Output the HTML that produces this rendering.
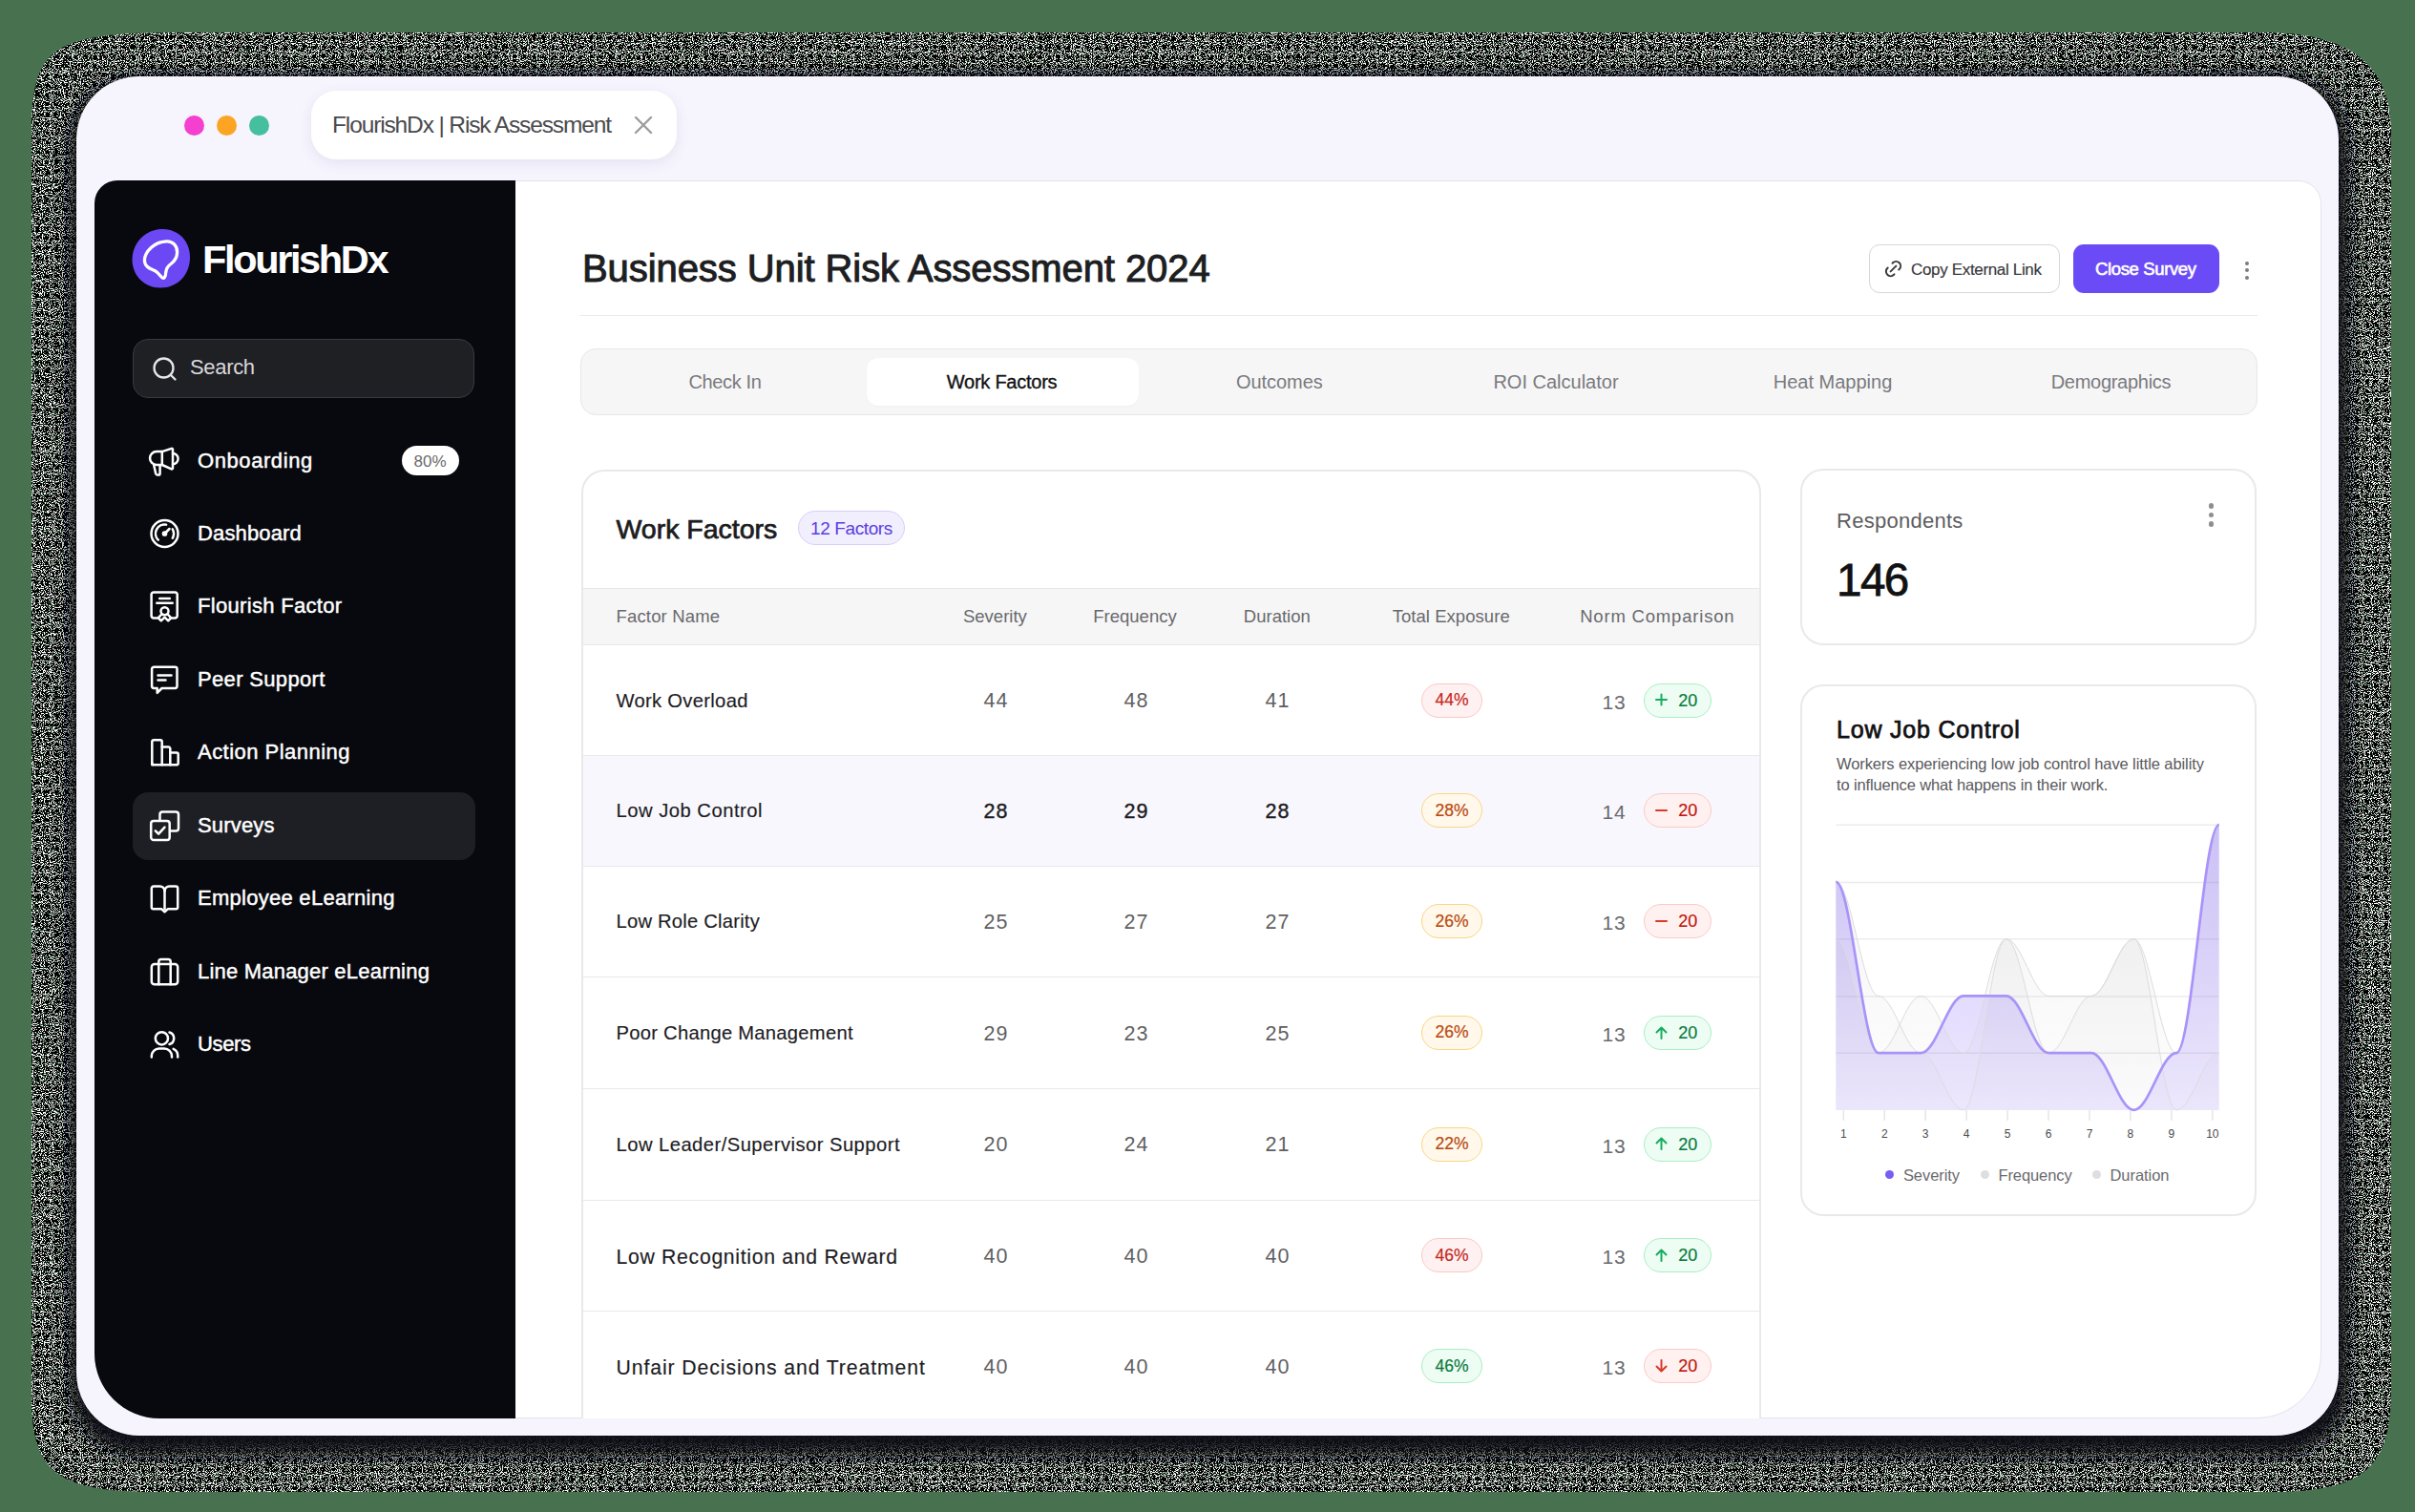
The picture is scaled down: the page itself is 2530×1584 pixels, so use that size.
<!DOCTYPE html>
<html><head><meta charset="utf-8"><title>FlourishDx | Risk Assessment</title>
<style>
html,body{margin:0;padding:0;width:2530px;height:1584px;overflow:hidden;background:#48714f;}
body{position:relative;font-family:"Liberation Sans", sans-serif;}
.b{position:absolute;}
.t{position:absolute;white-space:nowrap;}
</style></head><body>
<svg class="b" style="left:0;top:0" width="2530" height="1584" viewBox="0 0 2530 1584">
<defs>
<filter id="nz" x="0" y="0" width="100%" height="100%" color-interpolation-filters="sRGB">
<feTurbulence type="fractalNoise" baseFrequency="0.9" numOctaves="1" seed="11" result="n"/>
<feColorMatrix in="n" type="matrix" values="0 0 0 0 0  0 0 0 0 0  0 0 0 0 0  0 60 0 0 -24.000" result="ba"/>
<feFlood flood-color="#000000" result="bf"/>
<feComposite in="bf" in2="ba" operator="in" result="black"/>
<feColorMatrix in="n" type="matrix" values="0 0 0 0 0  0 0 0 0 0  0 0 0 0 0  60 0 0 0 -33.000" result="wa"/>
<feFlood flood-color="#ffffff" result="wf"/>
<feComposite in="wf" in2="wa" operator="in" result="white"/>
<feMerge><feMergeNode in="black"/><feMergeNode in="white"/></feMerge>
</filter>
<clipPath id="band"><path d="M188,34 L2371,34 C2462.12,34 2505,67.92 2505,140 L2505,1454 C2505,1539.02 2476.84,1563 2377,1563 L165,1563 C59.400000000000006,1563 33,1543.0 33,1463 L33,136 C33,49.3 56.25,34 188,34 Z"/></clipPath>
<filter id="blur1" x="-5%" y="-5%" width="110%" height="110%"><feGaussianBlur stdDeviation="9"/></filter>
</defs>
<rect x="0" y="0" width="2530" height="1584" fill="#48714f"/>
<g clip-path="url(#band)">
<rect x="0" y="0" width="2530" height="1584" filter="url(#nz)"/>
<rect x="73" y="79" width="2388" height="1446" rx="72" fill="#0a0a18" filter="url(#blur1)" opacity="0.95"/>
</g>
</svg>
<div class="b" style="left:80.00px;top:80.00px;width:2370.00px;height:1424.00px;background:#f6f4fd;border-radius:66px;"></div>
<div class="b" style="left:192.50px;top:121.10px;width:21.00px;height:21.00px;background:#f43fcf;border-radius:50%;"></div>
<div class="b" style="left:226.50px;top:121.10px;width:21.00px;height:21.00px;background:#fca523;border-radius:50%;"></div>
<div class="b" style="left:261.10px;top:121.10px;width:21.00px;height:21.00px;background:#46bea0;border-radius:50%;"></div>
<div class="b" style="left:326.00px;top:95.00px;width:383.00px;height:72.00px;background:#fff;border-radius:26px;box-shadow:0 4px 14px rgba(90,80,140,0.10);"></div>
<div class="t" style="top:119.26px;font-size:24.5px;line-height:24.5px;color:#4a4a4d;font-weight:400;letter-spacing:-1.133px;left:348.00px;"><span id="tabtitle">FlourishDx | Risk Assessment</span></div>
<svg class="b" style="left:662px;top:119px" width="24" height="24" viewBox="0 0 24 24"><path d="M4 4L20 20M20 4L4 20" stroke="#9c9c9f" stroke-width="2.4" stroke-linecap="round"/></svg>
<div class="b" style="left:99.00px;top:188.50px;width:2333.00px;height:1297.50px;background:#fff;border:1.5px solid #e4e3ea;box-sizing:border-box;border-radius:24px 24px 68px 68px;"></div>
<div class="b" style="left:99.00px;top:188.50px;width:440.50px;height:1297.50px;background:#08090e;border-radius:24px 0 0 68px;"></div>
<svg class="b" style="left:136px;top:238px" width="66" height="66" viewBox="0 0 66 66">
<path d="M34 2C50.5 2 63 14 63 31.5C63 50 50 63.5 32 63.5C15 63.5 2.5 50.5 2.5 34C2.5 16.5 16.5 2 34 2Z" fill="#6c48f4"/>
<path d="M38.6 14.8C45 14.5 49.8 19.5 49.6 26.6C49.4 32 47 35.5 43 38.5C39.5 41 38.2 43.5 37.8 47C37.5 50.5 36.8 53.5 34.8 53.4C33 53.3 31.2 48.5 26.5 45.8C22 43.5 16.5 42.5 15.6 36.5C14.8 31 18 25.5 22.2 21.5C27 17 33 15 38.6 14.8Z" fill="none" stroke="#fff" stroke-width="3.3" stroke-linejoin="round"/>
</svg>
<div class="t" style="top:250.87px;font-size:41.5px;line-height:41.5px;color:#ffffff;font-weight:700;letter-spacing:-2.361px;left:212.00px;"><span id="logotxt">FlourishDx</span></div>
<div class="b" style="left:139.00px;top:355.00px;width:358.00px;height:61.50px;background:#1f2024;border:1.5px solid #393a3f;box-sizing:border-box;border-radius:16px;"></div>
<svg class="b" style="left:159px;top:372.5px" width="28" height="28" viewBox="0 0 28 28"><circle cx="12.5" cy="12.5" r="10" fill="none" stroke="#e6e6e6" stroke-width="2.3"/><path d="M20 20L24.5 24.5" stroke="#e6e6e6" stroke-width="2.3" stroke-linecap="round"/></svg>
<div class="t" style="top:374.38px;font-size:22px;line-height:22px;color:#d9d9db;font-weight:400;letter-spacing:-0.323px;left:199.00px;"><span id="searchtxt">Search</span></div>
<div class="b" style="left:139.00px;top:830.00px;width:359.00px;height:70.50px;background:#1e1f24;border-radius:16px;"></div>
<svg class="b" style="left:157px;top:466.5px;overflow:visible" width="31" height="31" viewBox="0 0 31 31" fill="none" stroke="#fff" stroke-width="2.5" stroke-linecap="round" stroke-linejoin="round"><path d="M12.8 6.1H7A6.95 6.95 0 0 0 7 20h5.8l9.8 4.3a1 1 0 0 0 1.4-.9V3.8a1 1 0 0 0-1.4-.9L12.8 6.1z"/><path d="M12.8 6.1V20"/><path d="M24 8a5.6 5.6 0 0 1 0 11.2"/><path d="M4.2 20.2l2 9.1a1.6 1.6 0 0 0 1.6 1.2h1.2a1.6 1.6 0 0 0 1.6-1.6V20.2"/></svg>
<div class="t" style="top:471.58px;font-size:22px;line-height:22px;color:#ffffff;font-weight:400;letter-spacing:0.580px;-webkit-text-stroke:0.45px #fff;left:207.00px;"><span id="nav0">Onboarding</span></div>
<svg class="b" style="left:157px;top:542.9px;overflow:visible" width="31" height="31" viewBox="0 0 31 31" fill="none" stroke="#fff" stroke-width="2.5" stroke-linecap="round" stroke-linejoin="round"><circle cx="15.5" cy="16" r="14"/><path d="M8.78 22.72A9.5 9.5 0 0 1 17.15 6.64"/><path d="M23.73 11.25A9.5 9.5 0 0 1 23.73 20.75"/><path d="M15.5 16l5-5"/><circle cx="15.5" cy="16" r="1.6" fill="#fff"/></svg>
<div class="t" style="top:547.98px;font-size:22px;line-height:22px;color:#ffffff;font-weight:400;letter-spacing:0.145px;-webkit-text-stroke:0.45px #fff;left:207.00px;"><span id="nav1">Dashboard</span></div>
<svg class="b" style="left:157px;top:619.3px;overflow:visible" width="31" height="31" viewBox="0 0 31 31" fill="none" stroke="#fff" stroke-width="2.5" stroke-linecap="round" stroke-linejoin="round"><path d="M9 28.5H4a2.4 2.4 0 0 1-2.4-2.4V3.8A2.4 2.4 0 0 1 4 1.4h22.3a2.4 2.4 0 0 1 2.4 2.4v22.3a2.4 2.4 0 0 1-2.4 2.4H22"/><path d="M10.2 8h10.6M7.3 12.7h16.4"/><circle cx="15.5" cy="21.3" r="4"/><path d="M12.3 24.5L8.8 28.3l3 3 3.7-3.6 3.7 3.6 3-3-3.5-3.8"/></svg>
<div class="t" style="top:624.38px;font-size:22px;line-height:22px;color:#ffffff;font-weight:400;letter-spacing:0.320px;-webkit-text-stroke:0.45px #fff;left:207.00px;"><span id="nav2">Flourish Factor</span></div>
<svg class="b" style="left:157px;top:695.8px;overflow:visible" width="31" height="31" viewBox="0 0 31 31" fill="none" stroke="#fff" stroke-width="2.5" stroke-linecap="round" stroke-linejoin="round"><path d="M4.3 2.8h22a2.2 2.2 0 0 1 2.2 2.2V22.8a2.2 2.2 0 0 1-2.2 2.2H12.5l-4.8 4.8V25H4.3a2.2 2.2 0 0 1-2.2-2.2V5a2.2 2.2 0 0 1 2.2-2.2z"/><path d="M8.5 11.5h14M8.5 16.5h8"/></svg>
<div class="t" style="top:700.88px;font-size:22px;line-height:22px;color:#ffffff;font-weight:400;letter-spacing:0.333px;-webkit-text-stroke:0.45px #fff;left:207.00px;"><span id="nav3">Peer Support</span></div>
<svg class="b" style="left:157px;top:772.3px;overflow:visible" width="31" height="31" viewBox="0 0 31 31" fill="none" stroke="#fff" stroke-width="2.5" stroke-linecap="round" stroke-linejoin="round"><path d="M2.3 29.3V5a1.8 1.8 0 0 1 1.8-1.8h6.8A1.8 1.8 0 0 1 12.7 5v24.3"/><path d="M12.7 10.5h6.8a1.8 1.8 0 0 1 1.8 1.8v17"/><path d="M21.3 16.5h6.6a1.8 1.8 0 0 1 1.8 1.8v9.2a1.8 1.8 0 0 1-1.8 1.8H4.1a1.8 1.8 0 0 1-1.8-1.8"/></svg>
<div class="t" style="top:777.38px;font-size:22px;line-height:22px;color:#ffffff;font-weight:400;letter-spacing:0.472px;-webkit-text-stroke:0.45px #fff;left:207.00px;"><span id="nav4">Action Planning</span></div>
<svg class="b" style="left:157px;top:848.8px;overflow:visible" width="31" height="31" viewBox="0 0 31 31" fill="none" stroke="#fff" stroke-width="2.5" stroke-linecap="round" stroke-linejoin="round"><path d="M10.5 10V4.3a2.8 2.8 0 0 1 2.8-2.8h13.9a2.8 2.8 0 0 1 2.8 2.8v14.4a2.8 2.8 0 0 1-2.8 2.8h-5.5"/><rect x="1.2" y="11" width="19.5" height="20" rx="2.8"/><path d="M5.8 21.3l3.3 3.4 6.4-7"/></svg>
<div class="t" style="top:853.88px;font-size:22px;line-height:22px;color:#ffffff;font-weight:400;letter-spacing:0.171px;-webkit-text-stroke:0.45px #fff;left:207.00px;"><span id="nav5">Surveys</span></div>
<svg class="b" style="left:157px;top:925.2px;overflow:visible" width="31" height="31" viewBox="0 0 31 31" fill="none" stroke="#fff" stroke-width="2.5" stroke-linecap="round" stroke-linejoin="round"><path d="M15.5 8.5a5 5 0 0 0-5-5H4a2.2 2.2 0 0 0-2.2 2.2v19.8A1.8 1.8 0 0 0 3.6 27.3h8.7l3.2 3 3.2-3h8.7a1.8 1.8 0 0 0 1.8-1.8V5.7A2.2 2.2 0 0 0 27 3.5h-6.5a5 5 0 0 0-5 5z"/><path d="M15.5 8.5v18.8"/></svg>
<div class="t" style="top:930.28px;font-size:22px;line-height:22px;color:#ffffff;font-weight:400;letter-spacing:0.270px;-webkit-text-stroke:0.45px #fff;left:207.00px;"><span id="nav6">Employee eLearning</span></div>
<svg class="b" style="left:157px;top:1001.5px;overflow:visible" width="31" height="31" viewBox="0 0 31 31" fill="none" stroke="#fff" stroke-width="2.5" stroke-linecap="round" stroke-linejoin="round"><rect x="1.8" y="8" width="27.4" height="21.2" rx="3"/><path d="M9.3 8V5.5a2.5 2.5 0 0 1 2.5-2.5h7.4a2.5 2.5 0 0 1 2.5 2.5V8"/><path d="M9.3 8v21.2M21.7 8v21.2"/></svg>
<div class="t" style="top:1006.58px;font-size:22px;line-height:22px;color:#ffffff;font-weight:400;letter-spacing:0.209px;-webkit-text-stroke:0.45px #fff;left:207.00px;"><span id="nav7">Line Manager eLearning</span></div>
<svg class="b" style="left:157px;top:1078.2px;overflow:visible" width="31" height="31" viewBox="0 0 31 31" fill="none" stroke="#fff" stroke-width="2.5" stroke-linecap="round" stroke-linejoin="round"><circle cx="12.4" cy="9.8" r="6.6"/><path d="M1.8 29.5v-1.2a7.8 7.8 0 0 1 7.8-7.8h5.6a7.8 7.8 0 0 1 7.8 7.8v1.2"/><path d="M20.5 3.5a6.5 6.5 0 0 1 0 12.5"/><path d="M24.7 20.8a7.6 7.6 0 0 1 4.5 7v1.7"/></svg>
<div class="t" style="top:1083.28px;font-size:22px;line-height:22px;color:#ffffff;font-weight:400;letter-spacing:-0.365px;-webkit-text-stroke:0.45px #fff;left:207.00px;"><span id="nav8">Users</span></div>
<div class="b" style="left:420.50px;top:467.40px;width:60.20px;height:30.90px;background:#fff;border-radius:16px;"></div>
<div class="t" style="top:474.61px;font-size:17px;line-height:17px;color:#6b6b6b;font-weight:400;letter-spacing:0.000px;left:-149.40px;width:1200px;text-align:center;"><span id="pct80" style="margin-right:-0.000px">80%</span></div>
<div class="t" style="top:261.14px;font-size:40px;line-height:40px;color:#1d1e22;font-weight:400;letter-spacing:-0.079px;-webkit-text-stroke:1.0px #1d1e22;left:610.00px;"><span id="title">Business Unit Risk Assessment 2024</span></div>
<div class="b" style="left:1957.50px;top:255.70px;width:200.50px;height:51.30px;background:#fff;border:1.5px solid #d7d7da;box-sizing:border-box;border-radius:11px;"></div>
<svg class="b" style="left:1972px;top:270px" width="23" height="23" viewBox="0 0 24 24" fill="none" stroke="#3a3a3a" stroke-width="2.1" stroke-linecap="round" stroke-linejoin="round"><path d="M9 15l6-6"/><path d="M11 6l.46-.54a5 5 0 0 1 7.07 7.07l-.53.47"/><path d="M13 18l-.4.53a5.07 5.07 0 0 1-7.13 0 4.97 4.97 0 0 1 0-7.07l.53-.46"/></svg>
<div class="t" style="top:273.61px;font-size:17px;line-height:17px;color:#38383b;font-weight:400;letter-spacing:-0.335px;-webkit-text-stroke:0.15px #38383b;left:2002.00px;"><span id="copytxt">Copy External Link</span></div>
<div class="b" style="left:2172.00px;top:255.50px;width:153.00px;height:51.50px;background:#6b4bf5;border-radius:11px;"></div>
<div class="t" style="top:272.84px;font-size:18.5px;line-height:18.5px;color:#ffffff;font-weight:400;letter-spacing:-0.365px;-webkit-text-stroke:0.6px #fff;left:2195.00px;"><span id="closetxt">Close Survey</span></div>
<div class="b" style="left:2352.20px;top:273.80px;width:4.20px;height:4.20px;background:#7d7d80;border-radius:50%;"></div>
<div class="b" style="left:2352.20px;top:281.30px;width:4.20px;height:4.20px;background:#7d7d80;border-radius:50%;"></div>
<div class="b" style="left:2352.20px;top:288.80px;width:4.20px;height:4.20px;background:#7d7d80;border-radius:50%;"></div>
<div class="b" style="left:608.00px;top:329.50px;width:1757.00px;height:1.50px;background:#e9e9ec;"></div>
<div class="b" style="left:608.00px;top:365.00px;width:1757.00px;height:70.00px;background:#f6f6f7;border:1.5px solid #e7e7ea;box-sizing:border-box;border-radius:16px;"></div>
<div class="b" style="left:908.00px;top:375.00px;width:285.00px;height:50.00px;background:#fff;border-radius:12px;box-shadow:0 1px 2px rgba(0,0,0,0.03);"></div>
<div class="t" style="top:390.07px;font-size:20px;line-height:20px;color:#7a7a7d;font-weight:400;letter-spacing:-0.350px;left:159.70px;width:1200px;text-align:center;"><span id="tab0" style="margin-right:0.350px">Check In</span></div>
<div class="t" style="top:390.07px;font-size:20px;line-height:20px;color:#111114;font-weight:400;letter-spacing:-0.256px;-webkit-text-stroke:0.35px #111;left:449.70px;width:1200px;text-align:center;"><span id="tab1" style="margin-right:0.256px">Work Factors</span></div>
<div class="t" style="top:390.07px;font-size:20px;line-height:20px;color:#7a7a7d;font-weight:400;letter-spacing:-0.083px;left:740.40px;width:1200px;text-align:center;"><span id="tab2" style="margin-right:0.083px">Outcomes</span></div>
<div class="t" style="top:390.07px;font-size:20px;line-height:20px;color:#7a7a7d;font-weight:400;letter-spacing:0.000px;left:1030.00px;width:1200px;text-align:center;"><span id="tab3" style="margin-right:-0.000px">ROI Calculator</span></div>
<div class="t" style="top:390.07px;font-size:20px;line-height:20px;color:#7a7a7d;font-weight:400;letter-spacing:0.000px;left:1320.00px;width:1200px;text-align:center;"><span id="tab4" style="margin-right:-0.000px">Heat Mapping</span></div>
<div class="t" style="top:390.07px;font-size:20px;line-height:20px;color:#7a7a7d;font-weight:400;letter-spacing:-0.277px;left:1611.60px;width:1200px;text-align:center;"><span id="tab5" style="margin-right:0.277px">Demographics</span></div>
<div class="b" style="left:608.50px;top:491.70px;width:1236.00px;height:994.30px;background:#fff;border:2px solid #e9e9ec;border-bottom:none;box-sizing:border-box;border-radius:24px 24px 0 0;"></div>
<div class="t" style="top:539.87px;font-size:28.5px;line-height:28.5px;color:#1c1c1f;font-weight:400;letter-spacing:-0.021px;-webkit-text-stroke:0.75px #1c1c1f;left:645.50px;"><span id="wftitle">Work Factors</span></div>
<div class="b" style="left:836.00px;top:535.40px;width:112.30px;height:35.80px;background:#f1eefe;border:1.5px solid #d8cffb;box-sizing:border-box;border-radius:18px;"></div>
<div class="t" style="top:543.92px;font-size:19px;line-height:19px;color:#5b3de2;font-weight:400;letter-spacing:-0.395px;left:292.20px;width:1200px;text-align:center;"><span id="badge12" style="margin-right:0.395px">12 Factors</span></div>
<div class="b" style="left:610.50px;top:616.00px;width:1232.00px;height:60.00px;background:#f6f6f7;border-top:1.5px solid #e7e7ea;border-bottom:1.5px solid #e7e7ea;box-sizing:border-box;"></div>
<div class="t" style="top:636.84px;font-size:18.5px;line-height:18.5px;color:#69696c;font-weight:400;letter-spacing:0.165px;left:645.50px;"><span id="hname">Factor Name</span></div>
<div class="t" style="top:636.84px;font-size:18.5px;line-height:18.5px;color:#69696c;font-weight:400;letter-spacing:0.000px;left:442.40px;width:1200px;text-align:center;"><span id="h0" style="margin-right:-0.000px">Severity</span></div>
<div class="t" style="top:636.84px;font-size:18.5px;line-height:18.5px;color:#69696c;font-weight:400;letter-spacing:0.000px;left:589.00px;width:1200px;text-align:center;"><span id="h1" style="margin-right:-0.000px">Frequency</span></div>
<div class="t" style="top:636.84px;font-size:18.5px;line-height:18.5px;color:#69696c;font-weight:400;letter-spacing:0.000px;left:737.80px;width:1200px;text-align:center;"><span id="h2" style="margin-right:-0.000px">Duration</span></div>
<div class="t" style="top:636.84px;font-size:18.5px;line-height:18.5px;color:#69696c;font-weight:400;letter-spacing:0.049px;left:920.20px;width:1200px;text-align:center;"><span id="h3" style="margin-right:-0.049px">Total Exposure</span></div>
<div class="t" style="top:636.84px;font-size:18.5px;line-height:18.5px;color:#69696c;font-weight:400;letter-spacing:0.806px;left:1135.90px;width:1200px;text-align:center;"><span id="h4" style="margin-right:-0.806px">Norm Comparison</span></div>
<div class="t" style="top:723.60px;font-size:20.2px;line-height:20.2px;color:#1c1c1f;font-weight:400;letter-spacing:0.303px;-webkit-text-stroke:0.15px #1c1c1f;left:645.50px;"><span id="rn0">Work Overload</span></div>
<div class="t" style="top:724.20px;font-size:21.5px;line-height:21.5px;color:#5f5f62;font-weight:400;letter-spacing:1.200px;left:443.00px;width:1200px;text-align:center;"><span id="t32" style="margin-right:-1.200px">44</span></div>
<div class="t" style="top:724.20px;font-size:21.5px;line-height:21.5px;color:#5f5f62;font-weight:400;letter-spacing:1.200px;left:590.00px;width:1200px;text-align:center;"><span id="t33" style="margin-right:-1.200px">48</span></div>
<div class="t" style="top:724.20px;font-size:21.5px;line-height:21.5px;color:#5f5f62;font-weight:400;letter-spacing:1.200px;left:738.00px;width:1200px;text-align:center;"><span id="t34" style="margin-right:-1.200px">41</span></div>
<div class="b" style="left:1489.00px;top:715.60px;width:64.00px;height:36.00px;background:#fff1f1;border:1.5px solid #f9c8c6;box-sizing:border-box;border-radius:18px;"></div>
<div class="t" style="top:725.09px;font-size:17.5px;line-height:17.5px;color:#c5281d;font-weight:400;letter-spacing:0.000px;-webkit-text-stroke:0.2px #c5281d;left:921.00px;width:1200px;text-align:center;"><span id="t35" style="margin-right:-0.000px">44%</span></div>
<div class="t" style="top:724.72px;font-size:21px;line-height:21px;color:#6a6a6d;font-weight:400;letter-spacing:0.800px;left:1090.70px;width:1200px;text-align:center;"><span id="t36" style="margin-right:-0.800px">13</span></div>
<div class="b" style="left:1722.00px;top:715.60px;width:70.80px;height:36.00px;background:#edfdf4;border:1.5px solid #a9eec5;box-sizing:border-box;border-radius:18px;"></div>
<svg class="b" style="left:1734px;top:726.1px" width="13" height="14" viewBox="0 0 12 14" fill="none" stroke="#17ad5d" stroke-width="2" stroke-linecap="round" stroke-linejoin="round"><path d="M6 1.5v11M0.5 7h11"/></svg>
<div class="t" style="top:724.66px;font-size:18px;line-height:18px;color:#0c7a3f;font-weight:400;letter-spacing:0.000px;-webkit-text-stroke:0.2px #0c7a3f;left:1168.20px;width:1200px;text-align:center;"><span id="t37" style="margin-right:-0.000px">20</span></div>
<div class="b" style="left:610.50px;top:791.20px;width:1232.00px;height:116.10px;background:#f8f7fd;"></div>
<div class="b" style="left:610.50px;top:790.50px;width:1232.00px;height:1.25px;background:#e9e9ec;"></div>
<div class="t" style="top:839.25px;font-size:20.2px;line-height:20.2px;color:#1c1c1f;font-weight:400;letter-spacing:0.509px;-webkit-text-stroke:0.15px #1c1c1f;left:645.50px;"><span id="rn1">Low Job Control</span></div>
<div class="t" style="top:839.85px;font-size:21.5px;line-height:21.5px;color:#1c1c1f;font-weight:400;letter-spacing:1.200px;-webkit-text-stroke:0.4px #1c1c1f;left:443.00px;width:1200px;text-align:center;"><span id="t39" style="margin-right:-1.200px">28</span></div>
<div class="t" style="top:839.85px;font-size:21.5px;line-height:21.5px;color:#1c1c1f;font-weight:400;letter-spacing:1.200px;-webkit-text-stroke:0.4px #1c1c1f;left:590.00px;width:1200px;text-align:center;"><span id="t40" style="margin-right:-1.200px">29</span></div>
<div class="t" style="top:839.85px;font-size:21.5px;line-height:21.5px;color:#1c1c1f;font-weight:400;letter-spacing:1.200px;-webkit-text-stroke:0.4px #1c1c1f;left:738.00px;width:1200px;text-align:center;"><span id="t41" style="margin-right:-1.200px">28</span></div>
<div class="b" style="left:1489.00px;top:831.25px;width:64.00px;height:36.00px;background:#fff8eb;border:1.5px solid #f9d680;box-sizing:border-box;border-radius:18px;"></div>
<div class="t" style="top:840.74px;font-size:17.5px;line-height:17.5px;color:#b84a0e;font-weight:400;letter-spacing:0.000px;-webkit-text-stroke:0.2px #b84a0e;left:921.00px;width:1200px;text-align:center;"><span id="t42" style="margin-right:-0.000px">28%</span></div>
<div class="t" style="top:840.37px;font-size:21px;line-height:21px;color:#6a6a6d;font-weight:400;letter-spacing:0.800px;left:1090.70px;width:1200px;text-align:center;"><span id="t43" style="margin-right:-0.800px">14</span></div>
<div class="b" style="left:1722.00px;top:831.25px;width:70.80px;height:36.00px;background:#fef1f0;border:1.5px solid #fbcac7;box-sizing:border-box;border-radius:18px;"></div>
<svg class="b" style="left:1734px;top:841.8px" width="13" height="14" viewBox="0 0 12 14" fill="none" stroke="#d83a2c" stroke-width="2" stroke-linecap="round" stroke-linejoin="round"><path d="M0.5 7h11"/></svg>
<div class="t" style="top:840.31px;font-size:18px;line-height:18px;color:#c0170f;font-weight:400;letter-spacing:0.000px;-webkit-text-stroke:0.2px #c0170f;left:1168.20px;width:1200px;text-align:center;"><span id="t44" style="margin-right:-0.000px">20</span></div>
<div class="b" style="left:610.50px;top:906.50px;width:1232.00px;height:1.25px;background:#e9e9ec;"></div>
<div class="t" style="top:955.35px;font-size:20.2px;line-height:20.2px;color:#1c1c1f;font-weight:400;letter-spacing:0.221px;-webkit-text-stroke:0.15px #1c1c1f;left:645.50px;"><span id="rn2">Low Role Clarity</span></div>
<div class="t" style="top:955.95px;font-size:21.5px;line-height:21.5px;color:#5f5f62;font-weight:400;letter-spacing:1.200px;left:443.00px;width:1200px;text-align:center;"><span id="t46" style="margin-right:-1.200px">25</span></div>
<div class="t" style="top:955.95px;font-size:21.5px;line-height:21.5px;color:#5f5f62;font-weight:400;letter-spacing:1.200px;left:590.00px;width:1200px;text-align:center;"><span id="t47" style="margin-right:-1.200px">27</span></div>
<div class="t" style="top:955.95px;font-size:21.5px;line-height:21.5px;color:#5f5f62;font-weight:400;letter-spacing:1.200px;left:738.00px;width:1200px;text-align:center;"><span id="t48" style="margin-right:-1.200px">27</span></div>
<div class="b" style="left:1489.00px;top:947.35px;width:64.00px;height:36.00px;background:#fff8eb;border:1.5px solid #f9d680;box-sizing:border-box;border-radius:18px;"></div>
<div class="t" style="top:956.84px;font-size:17.5px;line-height:17.5px;color:#b84a0e;font-weight:400;letter-spacing:0.000px;-webkit-text-stroke:0.2px #b84a0e;left:921.00px;width:1200px;text-align:center;"><span id="t49" style="margin-right:-0.000px">26%</span></div>
<div class="t" style="top:956.47px;font-size:21px;line-height:21px;color:#6a6a6d;font-weight:400;letter-spacing:0.800px;left:1090.70px;width:1200px;text-align:center;"><span id="t50" style="margin-right:-0.800px">13</span></div>
<div class="b" style="left:1722.00px;top:947.35px;width:70.80px;height:36.00px;background:#fef1f0;border:1.5px solid #fbcac7;box-sizing:border-box;border-radius:18px;"></div>
<svg class="b" style="left:1734px;top:957.8px" width="13" height="14" viewBox="0 0 12 14" fill="none" stroke="#d83a2c" stroke-width="2" stroke-linecap="round" stroke-linejoin="round"><path d="M0.5 7h11"/></svg>
<div class="t" style="top:956.41px;font-size:18px;line-height:18px;color:#c0170f;font-weight:400;letter-spacing:0.000px;-webkit-text-stroke:0.2px #c0170f;left:1168.20px;width:1200px;text-align:center;"><span id="t51" style="margin-right:-0.000px">20</span></div>
<div class="b" style="left:610.50px;top:1022.50px;width:1232.00px;height:1.25px;background:#e9e9ec;"></div>
<div class="t" style="top:1071.95px;font-size:20.2px;line-height:20.2px;color:#1c1c1f;font-weight:400;letter-spacing:0.266px;-webkit-text-stroke:0.15px #1c1c1f;left:645.50px;"><span id="rn3">Poor Change Management</span></div>
<div class="t" style="top:1072.55px;font-size:21.5px;line-height:21.5px;color:#5f5f62;font-weight:400;letter-spacing:1.200px;left:443.00px;width:1200px;text-align:center;"><span id="t53" style="margin-right:-1.200px">29</span></div>
<div class="t" style="top:1072.55px;font-size:21.5px;line-height:21.5px;color:#5f5f62;font-weight:400;letter-spacing:1.200px;left:590.00px;width:1200px;text-align:center;"><span id="t54" style="margin-right:-1.200px">23</span></div>
<div class="t" style="top:1072.55px;font-size:21.5px;line-height:21.5px;color:#5f5f62;font-weight:400;letter-spacing:1.200px;left:738.00px;width:1200px;text-align:center;"><span id="t55" style="margin-right:-1.200px">25</span></div>
<div class="b" style="left:1489.00px;top:1063.95px;width:64.00px;height:36.00px;background:#fff8eb;border:1.5px solid #f9d680;box-sizing:border-box;border-radius:18px;"></div>
<div class="t" style="top:1073.44px;font-size:17.5px;line-height:17.5px;color:#b84a0e;font-weight:400;letter-spacing:0.000px;-webkit-text-stroke:0.2px #b84a0e;left:921.00px;width:1200px;text-align:center;"><span id="t56" style="margin-right:-0.000px">26%</span></div>
<div class="t" style="top:1073.07px;font-size:21px;line-height:21px;color:#6a6a6d;font-weight:400;letter-spacing:0.800px;left:1090.70px;width:1200px;text-align:center;"><span id="t57" style="margin-right:-0.800px">13</span></div>
<div class="b" style="left:1722.00px;top:1063.95px;width:70.80px;height:36.00px;background:#edfdf4;border:1.5px solid #a9eec5;box-sizing:border-box;border-radius:18px;"></div>
<svg class="b" style="left:1734px;top:1074.5px" width="13" height="14" viewBox="0 0 12 14" fill="none" stroke="#17ad5d" stroke-width="2" stroke-linecap="round" stroke-linejoin="round"><path d="M6 13V1.8M1 6.5L6 1.5l5 5"/></svg>
<div class="t" style="top:1073.01px;font-size:18px;line-height:18px;color:#0c7a3f;font-weight:400;letter-spacing:0.000px;-webkit-text-stroke:0.2px #0c7a3f;left:1168.20px;width:1200px;text-align:center;"><span id="t58" style="margin-right:-0.000px">20</span></div>
<div class="b" style="left:610.50px;top:1139.50px;width:1232.00px;height:1.25px;background:#e9e9ec;"></div>
<div class="t" style="top:1188.75px;font-size:20.2px;line-height:20.2px;color:#1c1c1f;font-weight:400;letter-spacing:0.467px;-webkit-text-stroke:0.15px #1c1c1f;left:645.50px;"><span id="rn4">Low Leader/Supervisor Support</span></div>
<div class="t" style="top:1189.35px;font-size:21.5px;line-height:21.5px;color:#5f5f62;font-weight:400;letter-spacing:1.200px;left:443.00px;width:1200px;text-align:center;"><span id="t60" style="margin-right:-1.200px">20</span></div>
<div class="t" style="top:1189.35px;font-size:21.5px;line-height:21.5px;color:#5f5f62;font-weight:400;letter-spacing:1.200px;left:590.00px;width:1200px;text-align:center;"><span id="t61" style="margin-right:-1.200px">24</span></div>
<div class="t" style="top:1189.35px;font-size:21.5px;line-height:21.5px;color:#5f5f62;font-weight:400;letter-spacing:1.200px;left:738.00px;width:1200px;text-align:center;"><span id="t62" style="margin-right:-1.200px">21</span></div>
<div class="b" style="left:1489.00px;top:1180.75px;width:64.00px;height:36.00px;background:#fff8eb;border:1.5px solid #f9d680;box-sizing:border-box;border-radius:18px;"></div>
<div class="t" style="top:1190.24px;font-size:17.5px;line-height:17.5px;color:#b84a0e;font-weight:400;letter-spacing:0.000px;-webkit-text-stroke:0.2px #b84a0e;left:921.00px;width:1200px;text-align:center;"><span id="t63" style="margin-right:-0.000px">22%</span></div>
<div class="t" style="top:1189.87px;font-size:21px;line-height:21px;color:#6a6a6d;font-weight:400;letter-spacing:0.800px;left:1090.70px;width:1200px;text-align:center;"><span id="t64" style="margin-right:-0.800px">13</span></div>
<div class="b" style="left:1722.00px;top:1180.75px;width:70.80px;height:36.00px;background:#edfdf4;border:1.5px solid #a9eec5;box-sizing:border-box;border-radius:18px;"></div>
<svg class="b" style="left:1734px;top:1191.2px" width="13" height="14" viewBox="0 0 12 14" fill="none" stroke="#17ad5d" stroke-width="2" stroke-linecap="round" stroke-linejoin="round"><path d="M6 13V1.8M1 6.5L6 1.5l5 5"/></svg>
<div class="t" style="top:1189.81px;font-size:18px;line-height:18px;color:#0c7a3f;font-weight:400;letter-spacing:0.000px;-webkit-text-stroke:0.2px #0c7a3f;left:1168.20px;width:1200px;text-align:center;"><span id="t65" style="margin-right:-0.000px">20</span></div>
<div class="b" style="left:610.50px;top:1256.50px;width:1232.00px;height:1.25px;background:#e9e9ec;"></div>
<div class="t" style="top:1306.15px;font-size:21.2px;line-height:21.2px;color:#1c1c1f;font-weight:400;letter-spacing:0.708px;-webkit-text-stroke:0.15px #1c1c1f;left:645.50px;"><span id="rn5">Low Recognition and Reward</span></div>
<div class="t" style="top:1305.70px;font-size:21.5px;line-height:21.5px;color:#5f5f62;font-weight:400;letter-spacing:1.200px;left:443.00px;width:1200px;text-align:center;"><span id="t67" style="margin-right:-1.200px">40</span></div>
<div class="t" style="top:1305.70px;font-size:21.5px;line-height:21.5px;color:#5f5f62;font-weight:400;letter-spacing:1.200px;left:590.00px;width:1200px;text-align:center;"><span id="t68" style="margin-right:-1.200px">40</span></div>
<div class="t" style="top:1305.70px;font-size:21.5px;line-height:21.5px;color:#5f5f62;font-weight:400;letter-spacing:1.200px;left:738.00px;width:1200px;text-align:center;"><span id="t69" style="margin-right:-1.200px">40</span></div>
<div class="b" style="left:1489.00px;top:1297.10px;width:64.00px;height:36.00px;background:#fff1f1;border:1.5px solid #f9c8c6;box-sizing:border-box;border-radius:18px;"></div>
<div class="t" style="top:1306.59px;font-size:17.5px;line-height:17.5px;color:#c5281d;font-weight:400;letter-spacing:0.000px;-webkit-text-stroke:0.2px #c5281d;left:921.00px;width:1200px;text-align:center;"><span id="t70" style="margin-right:-0.000px">46%</span></div>
<div class="t" style="top:1306.22px;font-size:21px;line-height:21px;color:#6a6a6d;font-weight:400;letter-spacing:0.800px;left:1090.70px;width:1200px;text-align:center;"><span id="t71" style="margin-right:-0.800px">13</span></div>
<div class="b" style="left:1722.00px;top:1297.10px;width:70.80px;height:36.00px;background:#edfdf4;border:1.5px solid #a9eec5;box-sizing:border-box;border-radius:18px;"></div>
<svg class="b" style="left:1734px;top:1307.6px" width="13" height="14" viewBox="0 0 12 14" fill="none" stroke="#17ad5d" stroke-width="2" stroke-linecap="round" stroke-linejoin="round"><path d="M6 13V1.8M1 6.5L6 1.5l5 5"/></svg>
<div class="t" style="top:1306.16px;font-size:18px;line-height:18px;color:#0c7a3f;font-weight:400;letter-spacing:0.000px;-webkit-text-stroke:0.2px #0c7a3f;left:1168.20px;width:1200px;text-align:center;"><span id="t72" style="margin-right:-0.000px">20</span></div>
<div class="b" style="left:610.50px;top:1372.50px;width:1232.00px;height:1.25px;background:#e9e9ec;"></div>
<div class="t" style="top:1422.35px;font-size:21.2px;line-height:21.2px;color:#1c1c1f;font-weight:400;letter-spacing:0.918px;-webkit-text-stroke:0.15px #1c1c1f;left:645.50px;"><span id="rn6">Unfair Decisions and Treatment</span></div>
<div class="t" style="top:1421.90px;font-size:21.5px;line-height:21.5px;color:#5f5f62;font-weight:400;letter-spacing:1.200px;left:443.00px;width:1200px;text-align:center;"><span id="t74" style="margin-right:-1.200px">40</span></div>
<div class="t" style="top:1421.90px;font-size:21.5px;line-height:21.5px;color:#5f5f62;font-weight:400;letter-spacing:1.200px;left:590.00px;width:1200px;text-align:center;"><span id="t75" style="margin-right:-1.200px">40</span></div>
<div class="t" style="top:1421.90px;font-size:21.5px;line-height:21.5px;color:#5f5f62;font-weight:400;letter-spacing:1.200px;left:738.00px;width:1200px;text-align:center;"><span id="t76" style="margin-right:-1.200px">40</span></div>
<div class="b" style="left:1489.00px;top:1413.30px;width:64.00px;height:36.00px;background:#edfdf3;border:1.5px solid #a9ecc3;box-sizing:border-box;border-radius:18px;"></div>
<div class="t" style="top:1422.79px;font-size:17.5px;line-height:17.5px;color:#0d7a3f;font-weight:400;letter-spacing:0.000px;-webkit-text-stroke:0.2px #0d7a3f;left:921.00px;width:1200px;text-align:center;"><span id="t77" style="margin-right:-0.000px">46%</span></div>
<div class="t" style="top:1422.42px;font-size:21px;line-height:21px;color:#6a6a6d;font-weight:400;letter-spacing:0.800px;left:1090.70px;width:1200px;text-align:center;"><span id="t78" style="margin-right:-0.800px">13</span></div>
<div class="b" style="left:1722.00px;top:1413.30px;width:70.80px;height:36.00px;background:#fef1f0;border:1.5px solid #fbcac7;box-sizing:border-box;border-radius:18px;"></div>
<svg class="b" style="left:1734px;top:1423.8px" width="13" height="14" viewBox="0 0 12 14" fill="none" stroke="#d83a2c" stroke-width="2" stroke-linecap="round" stroke-linejoin="round"><path d="M6 1v11.2M1 7.5l5 5 5-5"/></svg>
<div class="t" style="top:1422.36px;font-size:18px;line-height:18px;color:#c0170f;font-weight:400;letter-spacing:0.000px;-webkit-text-stroke:0.2px #c0170f;left:1168.20px;width:1200px;text-align:center;"><span id="t79" style="margin-right:-0.000px">20</span></div>
<div class="b" style="left:1886.00px;top:491.40px;width:478.00px;height:184.40px;background:#fff;border:2px solid #e9e9ec;box-sizing:border-box;border-radius:24px;"></div>
<div class="t" style="top:534.88px;font-size:22px;line-height:22px;color:#5d5d60;font-weight:400;letter-spacing:0.262px;left:1924.00px;"><span id="resp">Respondents</span></div>
<div class="t" style="top:583.99px;font-size:47.5px;line-height:47.5px;color:#111113;font-weight:400;letter-spacing:-1.531px;-webkit-text-stroke:0.8px #111;left:1924.00px;"><span id="n146">146</span></div>
<div class="b" style="left:2313.50px;top:527.00px;width:5.60px;height:5.60px;background:#8e8e91;border-radius:50%;"></div>
<div class="b" style="left:2313.50px;top:536.50px;width:5.60px;height:5.60px;background:#8e8e91;border-radius:50%;"></div>
<div class="b" style="left:2313.50px;top:546.00px;width:5.60px;height:5.60px;background:#8e8e91;border-radius:50%;"></div>
<div class="b" style="left:1886.00px;top:717.30px;width:478.00px;height:556.50px;background:#fff;border:2px solid #e9e9ec;box-sizing:border-box;border-radius:24px;"></div>
<div class="t" style="top:751.84px;font-size:25px;line-height:25px;color:#111113;font-weight:400;letter-spacing:0.796px;-webkit-text-stroke:0.75px #111;left:1924.00px;"><span id="ljc">Low Job Control</span></div>
<div class="t" style="top:792.03px;font-size:16.5px;line-height:16.5px;color:#5a5a5d;font-weight:400;letter-spacing:-0.099px;left:1924.00px;"><span id="desc1">Workers experiencing low job control have little ability</span></div>
<div class="t" style="top:813.93px;font-size:16.5px;line-height:16.5px;color:#5a5a5d;font-weight:400;letter-spacing:-0.140px;left:1924.00px;"><span id="desc2">to influence what happens in their work.</span></div>
<svg class="b" style="left:1900px;top:850px" width="450" height="360" viewBox="1900 850 450 360"><defs><linearGradient id="gg" x1="0" y1="864" x2="0" y2="1163" gradientUnits="userSpaceOnUse"><stop offset="0" stop-color="#000" stop-opacity="0.045"/><stop offset="1" stop-color="#000" stop-opacity="0.008"/></linearGradient><linearGradient id="pg" x1="0" y1="864" x2="0" y2="1163" gradientUnits="userSpaceOnUse"><stop offset="0" stop-color="#7a58f7" stop-opacity="0.33"/><stop offset="1" stop-color="#7a58f7" stop-opacity="0.13"/></linearGradient></defs><line x1="1923.3" y1="1103.2" x2="2324.7" y2="1103.2" stroke="#ececee" stroke-width="1.5"/><line x1="1923.3" y1="1044.0" x2="2324.7" y2="1044.0" stroke="#ececee" stroke-width="1.5"/><line x1="1923.3" y1="983.7" x2="2324.7" y2="983.7" stroke="#ececee" stroke-width="1.5"/><line x1="1923.3" y1="924.5" x2="2324.7" y2="924.5" stroke="#ececee" stroke-width="1.5"/><line x1="1923.3" y1="864.2" x2="2324.7" y2="864.2" stroke="#ececee" stroke-width="1.5"/><line x1="1931.30" y1="1163" x2="1931.30" y2="1174" stroke="#e6e6e8" stroke-width="1.5"/><line x1="1974.25" y1="1163" x2="1974.25" y2="1174" stroke="#e6e6e8" stroke-width="1.5"/><line x1="2017.20" y1="1163" x2="2017.20" y2="1174" stroke="#e6e6e8" stroke-width="1.5"/><line x1="2060.15" y1="1163" x2="2060.15" y2="1174" stroke="#e6e6e8" stroke-width="1.5"/><line x1="2103.10" y1="1163" x2="2103.10" y2="1174" stroke="#e6e6e8" stroke-width="1.5"/><line x1="2146.05" y1="1163" x2="2146.05" y2="1174" stroke="#e6e6e8" stroke-width="1.5"/><line x1="2189.00" y1="1163" x2="2189.00" y2="1174" stroke="#e6e6e8" stroke-width="1.5"/><line x1="2231.95" y1="1163" x2="2231.95" y2="1174" stroke="#e6e6e8" stroke-width="1.5"/><line x1="2274.90" y1="1163" x2="2274.90" y2="1174" stroke="#e6e6e8" stroke-width="1.5"/><line x1="2317.85" y1="1163" x2="2317.85" y2="1174" stroke="#e6e6e8" stroke-width="1.5"/><path d="M1923.30,923.94 C1939.36,923.94 1951.84,1043.42 1967.90,1043.42 C1983.96,1043.42 1996.44,1103.16 2012.50,1103.16 C2028.56,1103.16 2041.04,1162.90 2057.10,1162.90 C2073.16,1162.90 2085.64,983.68 2101.70,983.68 C2117.76,983.68 2130.24,1043.42 2146.30,1043.42 C2162.36,1043.42 2174.84,1043.42 2190.90,1043.42 C2206.96,1043.42 2219.44,983.68 2235.50,983.68 C2251.56,983.68 2264.04,1103.16 2280.10,1103.16 C2296.16,1103.16 2308.64,864.20 2324.70,864.20 L2324.70,1162.90 L1923.30,1162.90 Z" fill="url(#gg)"/><path d="M1923.30,983.68 C1939.36,983.68 1951.84,1103.16 1967.90,1103.16 C1983.96,1103.16 1996.44,1043.42 2012.50,1043.42 C2028.56,1043.42 2041.04,1103.16 2057.10,1103.16 C2073.16,1103.16 2085.64,983.68 2101.70,983.68 C2117.76,983.68 2130.24,1103.16 2146.30,1103.16 C2162.36,1103.16 2174.84,1043.42 2190.90,1043.42 C2206.96,1043.42 2219.44,983.68 2235.50,983.68 C2251.56,983.68 2264.04,1162.90 2280.10,1162.90 C2296.16,1162.90 2308.64,1103.16 2324.70,1103.16 L2324.70,1162.90 L1923.30,1162.90 Z" fill="url(#gg)"/><path d="M1923.30,923.94 C1939.36,923.94 1951.84,1103.16 1967.90,1103.16 C1983.96,1103.16 1996.44,1103.16 2012.50,1103.16 C2028.56,1103.16 2041.04,1043.42 2057.10,1043.42 C2073.16,1043.42 2085.64,1043.42 2101.70,1043.42 C2117.76,1043.42 2130.24,1103.16 2146.30,1103.16 C2162.36,1103.16 2174.84,1103.16 2190.90,1103.16 C2206.96,1103.16 2219.44,1162.90 2235.50,1162.90 C2251.56,1162.90 2264.04,1103.16 2280.10,1103.16 C2296.16,1103.16 2308.64,864.20 2324.70,864.20 L2324.70,1162.90 L1923.30,1162.90 Z" fill="url(#pg)"/><path d="M1923.30,923.94 C1939.36,923.94 1951.84,1043.42 1967.90,1043.42 C1983.96,1043.42 1996.44,1103.16 2012.50,1103.16 C2028.56,1103.16 2041.04,1162.90 2057.10,1162.90 C2073.16,1162.90 2085.64,983.68 2101.70,983.68 C2117.76,983.68 2130.24,1043.42 2146.30,1043.42 C2162.36,1043.42 2174.84,1043.42 2190.90,1043.42 C2206.96,1043.42 2219.44,983.68 2235.50,983.68 C2251.56,983.68 2264.04,1103.16 2280.10,1103.16 C2296.16,1103.16 2308.64,864.20 2324.70,864.20" fill="none" stroke="#dcdcdf" stroke-width="1"/><path d="M1923.30,983.68 C1939.36,983.68 1951.84,1103.16 1967.90,1103.16 C1983.96,1103.16 1996.44,1043.42 2012.50,1043.42 C2028.56,1043.42 2041.04,1103.16 2057.10,1103.16 C2073.16,1103.16 2085.64,983.68 2101.70,983.68 C2117.76,983.68 2130.24,1103.16 2146.30,1103.16 C2162.36,1103.16 2174.84,1043.42 2190.90,1043.42 C2206.96,1043.42 2219.44,983.68 2235.50,983.68 C2251.56,983.68 2264.04,1162.90 2280.10,1162.90 C2296.16,1162.90 2308.64,1103.16 2324.70,1103.16" fill="none" stroke="#dcdcdf" stroke-width="1"/><path d="M1923.30,923.94 C1939.36,923.94 1951.84,1103.16 1967.90,1103.16 C1983.96,1103.16 1996.44,1103.16 2012.50,1103.16 C2028.56,1103.16 2041.04,1043.42 2057.10,1043.42 C2073.16,1043.42 2085.64,1043.42 2101.70,1043.42 C2117.76,1043.42 2130.24,1103.16 2146.30,1103.16 C2162.36,1103.16 2174.84,1103.16 2190.90,1103.16 C2206.96,1103.16 2219.44,1162.90 2235.50,1162.90 C2251.56,1162.90 2264.04,1103.16 2280.10,1103.16 C2296.16,1103.16 2308.64,864.20 2324.70,864.20" fill="none" stroke="#a993f9" stroke-width="2.7"/></svg>
<div class="t" style="top:1182.14px;font-size:12px;line-height:12px;color:#4a4a4d;font-weight:400;letter-spacing:0.000px;left:1331.30px;width:1200px;text-align:center;"><span id="t85" style="margin-right:-0.000px">1</span></div>
<div class="t" style="top:1182.14px;font-size:12px;line-height:12px;color:#4a4a4d;font-weight:400;letter-spacing:0.000px;left:1374.25px;width:1200px;text-align:center;"><span id="t86" style="margin-right:-0.000px">2</span></div>
<div class="t" style="top:1182.14px;font-size:12px;line-height:12px;color:#4a4a4d;font-weight:400;letter-spacing:0.000px;left:1417.20px;width:1200px;text-align:center;"><span id="t87" style="margin-right:-0.000px">3</span></div>
<div class="t" style="top:1182.14px;font-size:12px;line-height:12px;color:#4a4a4d;font-weight:400;letter-spacing:0.000px;left:1460.15px;width:1200px;text-align:center;"><span id="t88" style="margin-right:-0.000px">4</span></div>
<div class="t" style="top:1182.14px;font-size:12px;line-height:12px;color:#4a4a4d;font-weight:400;letter-spacing:0.000px;left:1503.10px;width:1200px;text-align:center;"><span id="t89" style="margin-right:-0.000px">5</span></div>
<div class="t" style="top:1182.14px;font-size:12px;line-height:12px;color:#4a4a4d;font-weight:400;letter-spacing:0.000px;left:1546.05px;width:1200px;text-align:center;"><span id="t90" style="margin-right:-0.000px">6</span></div>
<div class="t" style="top:1182.14px;font-size:12px;line-height:12px;color:#4a4a4d;font-weight:400;letter-spacing:0.000px;left:1589.00px;width:1200px;text-align:center;"><span id="t91" style="margin-right:-0.000px">7</span></div>
<div class="t" style="top:1182.14px;font-size:12px;line-height:12px;color:#4a4a4d;font-weight:400;letter-spacing:0.000px;left:1631.95px;width:1200px;text-align:center;"><span id="t92" style="margin-right:-0.000px">8</span></div>
<div class="t" style="top:1182.14px;font-size:12px;line-height:12px;color:#4a4a4d;font-weight:400;letter-spacing:0.000px;left:1674.90px;width:1200px;text-align:center;"><span id="t93" style="margin-right:-0.000px">9</span></div>
<div class="t" style="top:1182.14px;font-size:12px;line-height:12px;color:#4a4a4d;font-weight:400;letter-spacing:0.000px;left:1717.85px;width:1200px;text-align:center;"><span id="t94" style="margin-right:-0.000px">10</span></div>
<div class="b" style="left:1975.00px;top:1226.00px;width:9.20px;height:9.20px;background:#7a5cf3;border-radius:50%;"></div>
<div class="b" style="left:2074.60px;top:1226.00px;width:9.20px;height:9.20px;background:#dedee0;border-radius:50%;"></div>
<div class="b" style="left:2191.80px;top:1226.00px;width:9.20px;height:9.20px;background:#dedee0;border-radius:50%;"></div>
<div class="t" style="top:1222.63px;font-size:16.5px;line-height:16.5px;color:#6a6a6d;font-weight:400;letter-spacing:-0.064px;left:1993.90px;"><span id="lg1">Severity</span></div>
<div class="t" style="top:1222.63px;font-size:16.5px;line-height:16.5px;color:#6a6a6d;font-weight:400;letter-spacing:-0.075px;left:2093.40px;"><span id="lg2">Frequency</span></div>
<div class="t" style="top:1222.63px;font-size:16.5px;line-height:16.5px;color:#6a6a6d;font-weight:400;letter-spacing:-0.052px;left:2210.50px;"><span id="lg3">Duration</span></div>
</body></html>
